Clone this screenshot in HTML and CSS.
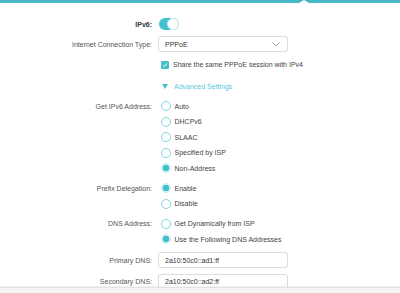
FILE: index.html
```html
<!DOCTYPE html>
<html lang="en">
<head>
  <meta charset="UTF-8" />
  <title>IPv6 Settings</title>
  <link rel="stylesheet" href="styles.css">
</head>
<body>
  <div class="top-bar"></div>

  <form class="settings">
    <div class="row">
      <span class="label strong">IPv6:</span>
      <div class="control">
        <span class="toggle"><span class="knob"></span></span>
      </div>
    </div>

    <div class="row row-select">
      <span class="label">Internet Connection Type:</span>
      <div class="control">
        <div class="select">
          <span>PPPoE</span>
          <svg class="chevron" width="8" height="5" viewBox="0 0 8 5"><path d="M0.5 0.5 L4 4 L7.5 0.5" fill="none" stroke="#9a9a9a" stroke-width="0.9"/></svg>
        </div>
      </div>
    </div>

    <div class="row row-check">
      <span class="label"></span>
      <div class="control indent">
        <span class="checkbox">
          <svg width="8" height="8" viewBox="0 0 8 8"><path d="M2 4.2 L3.4 5.5 L6 2.6" fill="none" stroke="#fff" stroke-width="1"/></svg>
        </span>
        <span class="opt-text">Share the same PPPoE session with IPv4</span>
      </div>
    </div>

    <div class="row row-adv">
      <span class="label"></span>
      <div class="control indent">
        <span class="caret"></span>
        <span class="link">Advanced Settings</span>
      </div>
    </div>

    <div class="group group-first">
      <span class="label">Get IPv6 Address:</span>
      <div class="options">
        <div class="option"><span class="radio"></span>Auto</div>
        <div class="option"><span class="radio"></span>DHCPv6</div>
        <div class="option"><span class="radio"></span>SLAAC</div>
        <div class="option"><span class="radio"></span>Specified by ISP</div>
        <div class="option"><span class="radio checked"></span>Non-Address</div>
      </div>
    </div>

    <div class="group">
      <span class="label">Prefix Delegation:</span>
      <div class="options">
        <div class="option"><span class="radio checked"></span>Enable</div>
        <div class="option"><span class="radio"></span>Disable</div>
      </div>
    </div>

    <div class="group">
      <span class="label">DNS Address:</span>
      <div class="options">
        <div class="option"><span class="radio"></span>Get Dynamically from ISP</div>
        <div class="option"><span class="radio checked"></span>Use the Following DNS Addresses</div>
      </div>
    </div>

    <div class="row row-input">
      <span class="label">Primary DNS:</span>
      <div class="control">
        <div class="input">2a10:50c0::ad1:ff</div>
      </div>
    </div>

    <div class="row row-input">
      <span class="label">Secondary DNS:</span>
      <div class="control">
        <div class="input">2a10:50c0::ad2:ff</div>
      </div>
    </div>
  </form>

  <div class="footer-bar"></div>
</body>
</html>
```

FILE: styles.css
```css
body {
  margin: 0;
  width: 400px;
  height: 293px;
  overflow: hidden;
  background: #fff;
  font-family: 'Liberation Sans', Arial, sans-serif;
  font-size: 7px;
  color: #555;
}
.top-bar {
  position: relative;
  height: 3px;
  background: #4ab7c7;
}
.top-bar::after {
  content: "";
  position: absolute;
  left: 299px;
  bottom: 0;
  border-left: 5px solid transparent;
  border-right: 5px solid transparent;
  border-bottom: 3px solid #fff;
}
.settings {
  padding-top: 13px;
}
.row {
  display: flex;
  align-items: center;
  height: 16px;
}
.label {
  flex: none;
  width: 152px;
  text-align: right;
}
.strong {
  font-weight: bold;
  color: #333;
}
.control {
  display: flex;
  align-items: center;
  margin-left: 6px;
}
.indent {
  margin-left: 9px;
}
.row-select {
  margin-top: 4px;
}
.row-check {
  margin-top: 4.5px;
}
.row-adv {
  margin-top: 6px;
}
.row-input {
  margin-top: 5.3px;
}

/* toggle */
.toggle {
  position: relative;
  width: 20px;
  height: 12px;
  border-radius: 6px;
  background: #47c0ce;
  margin-left: 1px;
}
.knob {
  position: absolute;
  right: 0;
  top: 0;
  width: 10px;
  height: 10px;
  border-radius: 50%;
  background: #fff;
  border: 1px solid #d6eef1;
}

/* select and text inputs */
.select, .input {
  display: flex;
  align-items: center;
  box-sizing: border-box;
  width: 130px;
  height: 16px;
  padding: 0 6px;
  border: 1px solid #dcdcdc;
  border-radius: 3px;
  color: #333;
}
.select span {
  flex: 1;
}
.chevron {
  margin-right: 1px;
}

/* checkbox */
.checkbox {
  display: flex;
  width: 8px;
  height: 8px;
  border-radius: 1px;
  background: #47c0ce;
}
.opt-text {
  margin-left: 4px;
  color: #444;
}

/* advanced settings link */
.caret {
  width: 0;
  height: 0;
  margin-left: 1px;
  border-left: 3px solid transparent;
  border-right: 3px solid transparent;
  border-top: 5px solid #47c0ce;
}
.link {
  margin-left: 6px;
  color: #5cc8d6;
}

/* radio groups */
.group {
  display: flex;
  align-items: flex-start;
  margin-top: 4.5px;
}
.group-first {
  margin-top: 4px;
}
.group .label {
  line-height: 15.5px;
}
.options {
  margin-left: 9px;
}
.option {
  display: flex;
  align-items: center;
  height: 15.5px;
  color: #444;
}
.radio {
  box-sizing: border-box;
  width: 10px;
  height: 10px;
  margin-right: 3.5px;
  border-radius: 50%;
  border: 1px solid #7fd3dd;
  background: #fff;
}
.radio.checked {
  border-color: #c5ecf0;
  background: radial-gradient(circle, #42bfcd 0, #42bfcd 3px, #d9f3f6 3.6px);
}

.footer-bar {
  position: fixed;
  left: 0;
  right: 0;
  bottom: 0;
  height: 5px;
  background: #f5f5f5;
  border-top: 1px solid #e2e2e2;
  box-shadow: 0 -1px 2px rgba(0, 0, 0, 0.06);
}
```
